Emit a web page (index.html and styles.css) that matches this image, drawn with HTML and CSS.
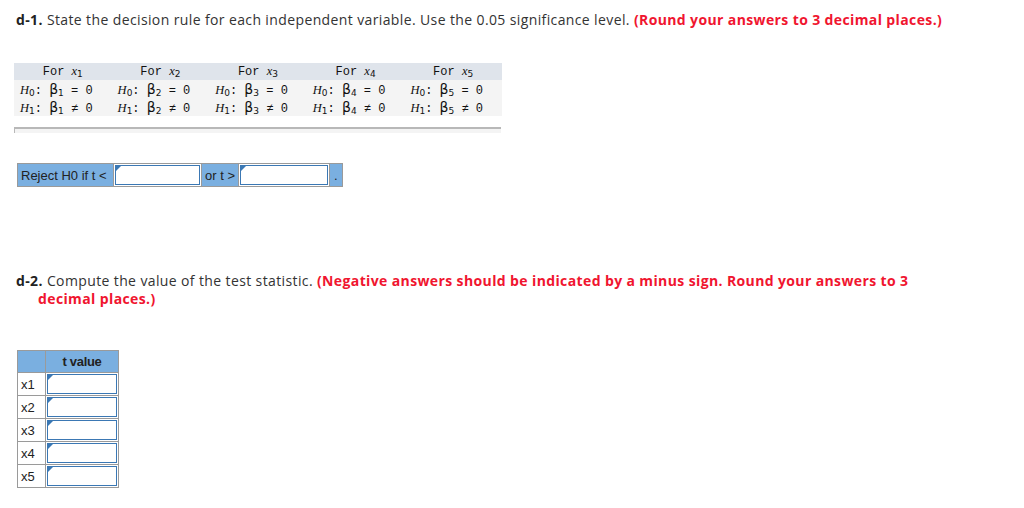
FILE: index.html
```html
<!DOCTYPE html>
<html>
<head>
<meta charset="utf-8">
<link rel="stylesheet" href="styles.css">
</head>
<body>
<div class="page">
  <p class="q q1"><b>d-1.</b> State the decision rule for each independent variable. Use the 0.05 significance level. <span class="red">(Round your answers to 3 decimal places.)</span></p>

  <div class="hyp">
    <div class="hyp-head">
      <div class="hc">For <i>x</i><sub>1</sub></div>
      <div class="hc">For <i>x</i><sub>2</sub></div>
      <div class="hc">For <i>x</i><sub>3</sub></div>
      <div class="hc">For <i>x</i><sub>4</sub></div>
      <div class="hc">For <i>x</i><sub>5</sub></div>
    </div>
    <div class="hyp-row">
      <div class="hr"><i class="h">H</i><sub>0</sub>: <span class="b">β</span><sub>1</sub> = 0</div>
      <div class="hr"><i class="h">H</i><sub>0</sub>: <span class="b">β</span><sub>2</sub> = 0</div>
      <div class="hr"><i class="h">H</i><sub>0</sub>: <span class="b">β</span><sub>3</sub> = 0</div>
      <div class="hr"><i class="h">H</i><sub>0</sub>: <span class="b">β</span><sub>4</sub> = 0</div>
      <div class="hr"><i class="h">H</i><sub>0</sub>: <span class="b">β</span><sub>5</sub> = 0</div>
    </div>
    <div class="hyp-row">
      <div class="hr"><i class="h">H</i><sub>1</sub>: <span class="b">β</span><sub>1</sub> ≠ 0</div>
      <div class="hr"><i class="h">H</i><sub>1</sub>: <span class="b">β</span><sub>2</sub> ≠ 0</div>
      <div class="hr"><i class="h">H</i><sub>1</sub>: <span class="b">β</span><sub>3</sub> ≠ 0</div>
      <div class="hr"><i class="h">H</i><sub>1</sub>: <span class="b">β</span><sub>4</sub> ≠ 0</div>
      <div class="hr"><i class="h">H</i><sub>1</sub>: <span class="b">β</span><sub>5</sub> ≠ 0</div>
    </div>
  </div>
  <div class="scrollbar"></div>

  <div class="reject">
    <div class="cell lbl l1">Reject H0 if t &lt;</div>
    <div class="cell inp w1"><span class="box"></span></div>
    <div class="cell lbl l2">or t &gt;</div>
    <div class="cell inp w2"><span class="box"></span></div>
    <div class="cell lbl dot">.</div>
  </div>

  <p class="q q2"><b>d-2.</b> Compute the value of the test statistic. <span class="red">(Negative answers should be indicated by a minus sign. Round your answers to 3 decimal places.)</span></p>

  <table class="tv">
    <tr><th class="blank"></th><th>t value</th></tr>
    <tr><td class="rl">x1</td><td class="in"><span class="box"></span></td></tr>
    <tr><td class="rl">x2</td><td class="in"><span class="box"></span></td></tr>
    <tr><td class="rl">x3</td><td class="in"><span class="box"></span></td></tr>
    <tr><td class="rl">x4</td><td class="in"><span class="box"></span></td></tr>
    <tr><td class="rl">x5</td><td class="in"><span class="box"></span></td></tr>
  </table>
</div>
</body>
</html>
```

FILE: styles.css
```css
* { box-sizing: border-box; }
body {
  margin: 0;
  background: #fff;
  font-family: "Open Sans", Arial, sans-serif;
  color: #333;
}
.page {
  padding: 11px 0 0 16px;
  width: 955px;
}
.q {
  margin: 0;
  font-size: 14px;
  line-height: 18px;
  letter-spacing: 0.38px;
}
.q b { font-weight: 700; color: #222; }
.red { color: #f0152f; font-weight: 700; }
.q2 {
  margin-top: 85px;
  padding-left: 22px;
  text-indent: -22px;
}

.hyp {
  margin: 34px 0 0 -2px;
  width: 488px;
  font-family: "Liberation Mono", "Courier New", monospace;
  font-size: 12px;
  color: #111;
}
.hyp-head {
  display: flex;
  background: #dfe4eb;
  height: 17px;
  align-items: center;
}
.hyp-row {
  display: flex;
  background: #f4f4f4;
  height: 18px;
  align-items: center;
}
.hc { flex: 1; text-align: center; }
.hr { flex: 1; padding-left: 6px; white-space: nowrap; }
.hyp i { font-family: "Liberation Serif", serif; font-size: 12.5px; }
.hyp sub { font-size: 9px; vertical-align: -2px; font-family: "DejaVu Sans", sans-serif; }
.hyp .b { font-family: "DejaVu Sans", sans-serif; font-size: 14px; }
.scrollbar {
  margin: 11px 0 0 -2px;
  width: 487px;
  height: 6px;
  border-top: 2px solid #b8b8b8;
  border-left: 1px solid #b8b8b8;
  background: #f4f4f4;
}

.reject {
  display: flex;
  margin-top: 30px;
  margin-left: 1px;
  height: 24px;
  font-size: 13px;
  font-family: "Liberation Sans", Arial, sans-serif;
  color: #222;
}
.cell {
  border: 1px solid #9a9a9a;
  border-left: none;
  height: 24px;
  display: flex;
  align-items: center;
}
.cell:first-child { border-left: 1px solid #9a9a9a; }
.lbl {
  background: #7aafe0;
  padding: 0 0 0 3px;
  white-space: nowrap;
}
.l1 { width: 97px; }
.l2 { width: 37px; }
.dot { width: 13px; padding-left: 4px; }
.inp { padding: 1px; background: #fff; }
.w1 { width: 88px; }
.w2 { width: 91px; }
.box {
  position: relative;
  display: block;
  width: 100%;
  height: 100%;
  border: 1px solid #3b78b4;
  background: #fff;
}
.box::before {
  content: "";
  position: absolute;
  left: 0;
  top: 0;
  border-top: 5px solid #3b78b4;
  border-right: 5px solid transparent;
}

.tv {
  margin: 42px 0 0 1px;
  border-collapse: collapse;
  font-family: "Liberation Sans", Arial, sans-serif;
  font-size: 13px;
  color: #222;
}
.tv th {
  background: #7aafe0;
  border: 1px solid #9a9a9a;
  height: 22px;
  width: 73px;
  font-weight: 700;
  padding: 0;
  letter-spacing: -0.3px;
}
.tv th.blank { width: 28px; }
.tv td {
  border: 1px solid #9a9a9a;
  height: 23px;
  padding: 0;
}
.tv td.rl { padding-left: 3px; width: 28px; }
.tv td.in { padding: 1px; }
.tv td.in .box { height: 20px; }
```
